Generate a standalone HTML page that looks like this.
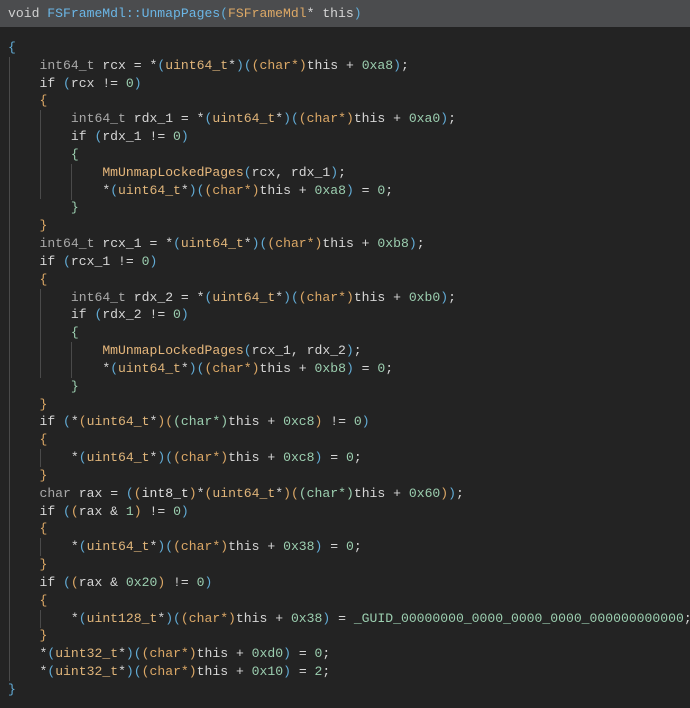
<!DOCTYPE html><html><head><style>
body{margin:0;width:690px;height:708px;background:#232323;overflow:hidden;font-family:"Liberation Mono",monospace;font-size:13.1px;color:#d6d6d6;position:relative}
.hd{position:absolute;left:0;top:0;width:690px;height:27px;background:#4b4c4e;line-height:27px;padding-left:8px;box-sizing:border-box;white-space:pre}
.code{position:absolute;left:-7.7px;top:39px}
.l{height:17.83px;line-height:17.83px;white-space:pre}
.k{color:#a9a9a9}.b{color:#62acd6}.o{color:#dca866}.g{color:#9ccfb0}.t{color:#e0b57a}.f{color:#e6b77c}.fn{color:#6bb6e6}.w{color:#e0e0e0}
.v{position:absolute;width:1px;background:#4a4a4a}
</style></head><body>
<div class="hd"><span class="k" style="color:#d0d0d0">void</span> <span class="fn">FSFrameMdl::UnmapPages</span><span class="b">(</span><span class="o">FSFrameMdl</span>* this<span class="b">)</span></div>
<div class="v" style="left:9px;top:57px;height:624px"></div>
<div class="v" style="left:40px;top:110px;height:89px"></div>
<div class="v" style="left:71px;top:164px;height:36px"></div>
<div class="v" style="left:40px;top:289px;height:89px"></div>
<div class="v" style="left:71px;top:342px;height:36px"></div>
<div class="v" style="left:40px;top:449px;height:18px"></div>
<div class="v" style="left:40px;top:538px;height:18px"></div>
<div class="v" style="left:40px;top:610px;height:18px"></div>
<div class="code"><div class="l">  <span class="b">{</span></div><div class="l">      <span class="k">int64_t</span> rcx = *<span class="b">(</span><span class="t">uint64_t</span>*<span class="b">)</span><span class="b">(</span><span class="o">(char*)</span>this + <span class="g">0xa8</span><span class="b">)</span>;</div><div class="l">      if <span class="b">(</span>rcx != <span class="g">0</span><span class="b">)</span></div><div class="l">      <span class="o">{</span></div><div class="l">          <span class="k">int64_t</span> rdx_1 = *<span class="b">(</span><span class="t">uint64_t</span>*<span class="b">)</span><span class="b">(</span><span class="o">(char*)</span>this + <span class="g">0xa0</span><span class="b">)</span>;</div><div class="l">          if <span class="b">(</span>rdx_1 != <span class="g">0</span><span class="b">)</span></div><div class="l">          <span class="g">{</span></div><div class="l">              <span class="f">MmUnmapLockedPages</span><span class="b">(</span>rcx, rdx_1<span class="b">)</span>;</div><div class="l">              *<span class="b">(</span><span class="t">uint64_t</span>*<span class="b">)</span><span class="b">(</span><span class="o">(char*)</span>this + <span class="g">0xa8</span><span class="b">)</span> = <span class="g">0</span>;</div><div class="l">          <span class="g">}</span></div><div class="l">      <span class="o">}</span></div><div class="l">      <span class="k">int64_t</span> rcx_1 = *<span class="b">(</span><span class="t">uint64_t</span>*<span class="b">)</span><span class="b">(</span><span class="o">(char*)</span>this + <span class="g">0xb8</span><span class="b">)</span>;</div><div class="l">      if <span class="b">(</span>rcx_1 != <span class="g">0</span><span class="b">)</span></div><div class="l">      <span class="o">{</span></div><div class="l">          <span class="k">int64_t</span> rdx_2 = *<span class="b">(</span><span class="t">uint64_t</span>*<span class="b">)</span><span class="b">(</span><span class="o">(char*)</span>this + <span class="g">0xb0</span><span class="b">)</span>;</div><div class="l">          if <span class="b">(</span>rdx_2 != <span class="g">0</span><span class="b">)</span></div><div class="l">          <span class="g">{</span></div><div class="l">              <span class="f">MmUnmapLockedPages</span><span class="b">(</span>rcx_1, rdx_2<span class="b">)</span>;</div><div class="l">              *<span class="b">(</span><span class="t">uint64_t</span>*<span class="b">)</span><span class="b">(</span><span class="o">(char*)</span>this + <span class="g">0xb8</span><span class="b">)</span> = <span class="g">0</span>;</div><div class="l">          <span class="g">}</span></div><div class="l">      <span class="o">}</span></div><div class="l">      if <span class="b">(</span>*<span class="o">(</span><span class="t">uint64_t</span>*<span class="o">)</span><span class="o">(</span><span class="g">(char*)</span>this + <span class="g">0xc8</span><span class="o">)</span> != <span class="g">0</span><span class="b">)</span></div><div class="l">      <span class="o">{</span></div><div class="l">          *<span class="b">(</span><span class="t">uint64_t</span>*<span class="b">)</span><span class="b">(</span><span class="o">(char*)</span>this + <span class="g">0xc8</span><span class="b">)</span> = <span class="g">0</span>;</div><div class="l">      <span class="o">}</span></div><div class="l">      <span class="k">char</span> rax = <span class="b">(</span><span class="o">(</span><span class="w">int8_t</span><span class="o">)</span>*<span class="o">(</span><span class="t">uint64_t</span>*<span class="o">)</span><span class="o">(</span><span class="g">(char*)</span>this + <span class="g">0x60</span><span class="o">)</span><span class="b">)</span>;</div><div class="l">      if <span class="b">(</span><span class="o">(</span>rax &amp; <span class="g">1</span><span class="o">)</span> != <span class="g">0</span><span class="b">)</span></div><div class="l">      <span class="o">{</span></div><div class="l">          *<span class="b">(</span><span class="t">uint64_t</span>*<span class="b">)</span><span class="b">(</span><span class="o">(char*)</span>this + <span class="g">0x38</span><span class="b">)</span> = <span class="g">0</span>;</div><div class="l">      <span class="o">}</span></div><div class="l">      if <span class="b">(</span><span class="o">(</span>rax &amp; <span class="g">0x20</span><span class="o">)</span> != <span class="g">0</span><span class="b">)</span></div><div class="l">      <span class="o">{</span></div><div class="l">          *<span class="b">(</span><span class="t">uint128_t</span>*<span class="b">)</span><span class="b">(</span><span class="o">(char*)</span>this + <span class="g">0x38</span><span class="b">)</span> = <span class="g">_GUID_00000000_0000_0000_0000_000000000000</span>;</div><div class="l">      <span class="o">}</span></div><div class="l">      *<span class="b">(</span><span class="t">uint32_t</span>*<span class="b">)</span><span class="b">(</span><span class="o">(char*)</span>this + <span class="g">0xd0</span><span class="b">)</span> = <span class="g">0</span>;</div><div class="l">      *<span class="b">(</span><span class="t">uint32_t</span>*<span class="b">)</span><span class="b">(</span><span class="o">(char*)</span>this + <span class="g">0x10</span><span class="b">)</span> = <span class="g">2</span>;</div><div class="l">  <span class="b">}</span></div></div>
</body></html>
